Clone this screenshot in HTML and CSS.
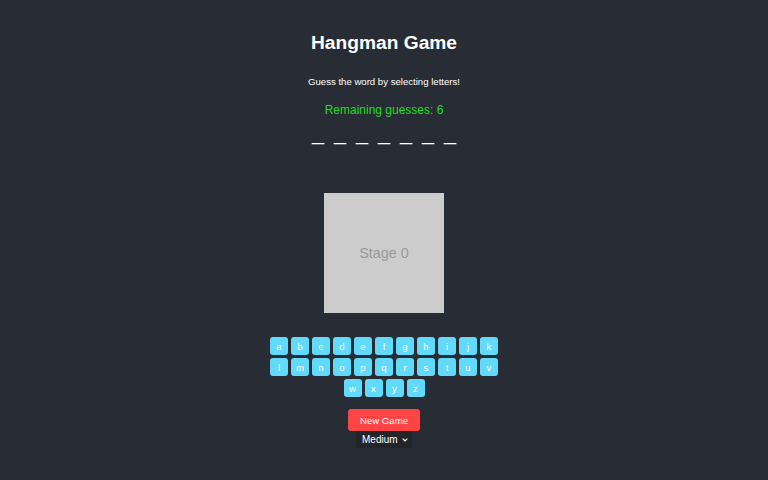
FILE: index.html
```html
<!DOCTYPE html>
<html lang="en">
<head>
<meta charset="utf-8">
<title>Hangman Game</title>
<link rel="stylesheet" href="styles.css">
</head>
<body>
<div class="app">
  <h1 class="title">Hangman Game</h1>
  <p class="subtitle">Guess the word by selecting letters!</p>
  <p class="remaining">Remaining guesses: 6</p>
  <div class="word">
    <span class="slot">_</span><span class="slot">_</span><span class="slot">_</span><span class="slot">_</span><span class="slot">_</span><span class="slot">_</span><span class="slot">_</span>
  </div>
  <div class="gallows">Stage 0</div>
  <div class="keyboard">
    <div class="key-row">
      <button class="key">a</button><button class="key">b</button><button class="key">c</button><button class="key">d</button><button class="key">e</button><button class="key">f</button><button class="key">g</button><button class="key">h</button><button class="key">i</button><button class="key">j</button><button class="key">k</button>
    </div>
    <div class="key-row">
      <button class="key">l</button><button class="key">m</button><button class="key">n</button><button class="key">o</button><button class="key">p</button><button class="key">q</button><button class="key">r</button><button class="key">s</button><button class="key">t</button><button class="key">u</button><button class="key">v</button>
    </div>
    <div class="key-row">
      <button class="key">w</button><button class="key">x</button><button class="key">y</button><button class="key">z</button>
    </div>
  </div>
  <button class="new-game">New Game</button>
  <div class="select-wrap">
    <select class="difficulty">
      <option>Easy</option>
      <option selected>Medium</option>
      <option>Hard</option>
    </select>
    <svg class="chevron" width="6" height="4" viewBox="0 0 6 4" aria-hidden="true">
      <path d="M0.7 0.7 L3 3 L5.3 0.7" fill="none" stroke="#ffffff" stroke-width="1.2"/>
    </svg>
  </div>
</div>
</body>
</html>
```

FILE: styles.css
```css
html, body {
  margin: 0;
  padding: 0;
  height: 100%;
  background: #282c34;
}

body {
  font-family: "Liberation Sans", Arial, sans-serif;
  color: #ffffff;
}

.app {
  display: flex;
  flex-direction: column;
  align-items: center;
  padding-top: 32px;
}

.title {
  margin: 0;
  font-size: 19.2px;
  line-height: 22px;
  font-weight: bold;
}

.subtitle {
  margin: 22px 0 0;
  font-size: 9.6px;
  line-height: 12px;
}

.remaining {
  margin: 15px 0 0;
  font-size: 12px;
  line-height: 14px;
  color: #22dd22;
}

.word {
  margin-top: 3px;
  display: flex;
  gap: 10px;
  font-size: 21.6px;
  line-height: 25px;
}

.gallows {
  margin-top: 48px;
  width: 120px;
  height: 120px;
  background: #cccccc;
  color: #999999;
  font-size: 14.4px;
  display: flex;
  align-items: center;
  justify-content: center;
}

.keyboard {
  margin-top: 24px;
  display: flex;
  flex-direction: column;
  align-items: center;
  gap: 3px;
}

.key-row {
  display: flex;
  gap: 3px;
}

.key {
  width: 18px;
  height: 18px;
  padding: 0;
  border: none;
  border-radius: 3px;
  background: #61dafb;
  color: #ffffff;
  font-family: "Liberation Sans", Arial, sans-serif;
  font-size: 9.6px;
  cursor: pointer;
}

.new-game {
  margin-top: 12px;
  width: 72px;
  height: 22px;
  padding: 0;
  border: none;
  border-radius: 3px;
  background: #ff4444;
  color: #ffffff;
  font-family: "Liberation Sans", Arial, sans-serif;
  font-size: 9.6px;
}

.select-wrap {
  position: relative;
  margin-top: 0;
}

.difficulty {
  appearance: none;
  -webkit-appearance: none;
  display: block;
  width: 56px;
  height: 17px;
  padding: 0 0 0 6px;
  border: none;
  border-radius: 2px;
  background: #232529;
  color: #ffffff;
  font-family: "Liberation Sans", Arial, sans-serif;
  font-size: 10px;
  line-height: 17px;
}

.chevron {
  position: absolute;
  right: 4px;
  top: 7px;
  pointer-events: none;
}
```
